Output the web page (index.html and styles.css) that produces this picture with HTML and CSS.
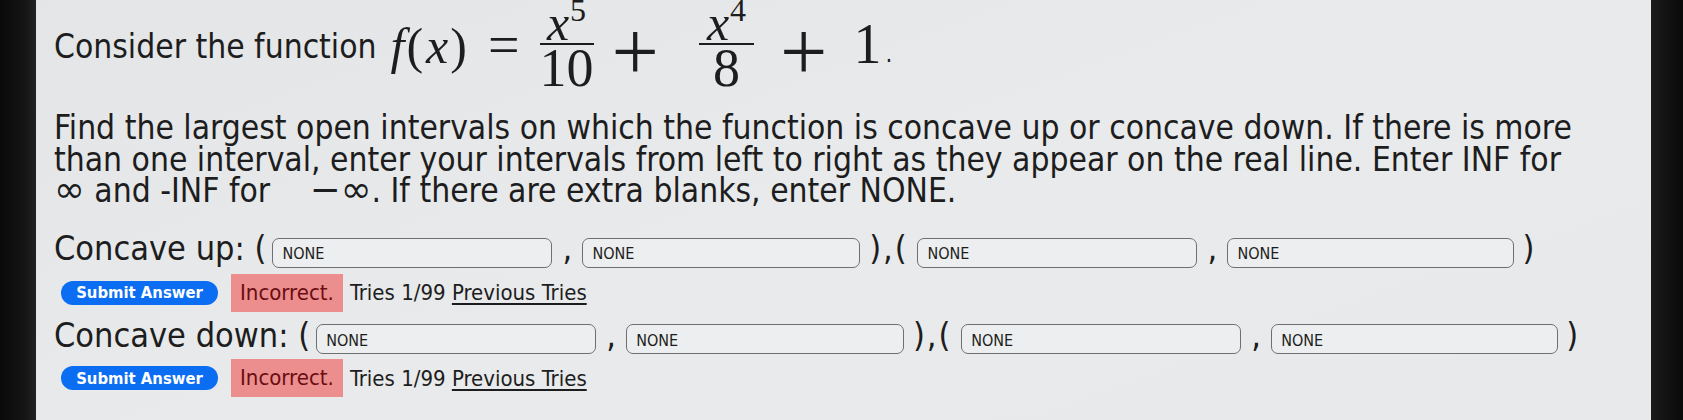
FILE: index.html
```html
<!DOCTYPE html>
<html lang="en">
<head>
<meta charset="utf-8">
<title>Concavity</title>
<link rel="stylesheet" href="styles.css">
</head>
<body>
<div class="screen">
  <div class="bezel bezel-left"></div>
  <main class="page">
    <p class="intro">Consider the function<span class="math"><span class="mi f">f</span><span class="paren">(</span><span class="mi">x</span><span class="paren">)</span><span class="rel">=</span><span class="frac frac-a"><span class="num"><span class="mi">x</span><sup>5</sup></span><span class="den">10</span></span><span class="bin bin-a">+</span><span class="frac frac-b"><span class="num"><span class="mi">x</span><sup>4</sup></span><span class="den">8</span></span><span class="bin bin-b">+</span><span class="mn">1</span></span><span class="dot">.</span></p>

    <p class="prompt">Find the largest open intervals on which the function is concave up or concave down. If there is more than one interval, enter your intervals from left to right as they appear on the real line. Enter INF for <span class="sym">∞</span> and -INF for <span class="sym neg">−∞</span>. If there are extra blanks, enter NONE.</p>

    <div class="answer-row">
      <span class="label">Concave up: (</span>
      <input class="ans a1" type="text" value="NONE">
      <span class="sep">,</span>
      <input class="ans a2" type="text" value="NONE">
      <span class="mid">),(</span>
      <input class="ans a3" type="text" value="NONE">
      <span class="sep">,</span>
      <input class="ans a4" type="text" value="NONE">
      <span class="close">)</span>
    </div>
    <div class="result-row">
      <button class="submit" type="button">Submit Answer</button>
      <span class="verdict">Incorrect.</span>
      <span class="tries">Tries 1/99 <a href="#" class="prev">Previous Tries</a></span>
    </div>

    <div class="answer-row">
      <span class="label">Concave down: (</span>
      <input class="ans a1" type="text" value="NONE">
      <span class="sep">,</span>
      <input class="ans a2" type="text" value="NONE">
      <span class="mid">),(</span>
      <input class="ans a3" type="text" value="NONE">
      <span class="sep">,</span>
      <input class="ans a4" type="text" value="NONE">
      <span class="close">)</span>
    </div>
    <div class="result-row">
      <button class="submit" type="button">Submit Answer</button>
      <span class="verdict">Incorrect.</span>
      <span class="tries">Tries 1/99 <a href="#" class="prev">Previous Tries</a></span>
    </div>
  </main>
  <div class="bezel bezel-right"></div>
</div>
</body>
</html>
```

FILE: styles.css
```css
html, body {
  margin: 0;
  padding: 0;
  height: 100%;
  background: #0d0d0e;
  overflow: hidden;
}

.screen {
  display: flex;
  height: 420px;
}

.bezel {
  flex: none;
}

.bezel-left {
  width: 36px;
  background: linear-gradient(to right, #0a0a0a, #151516 70%, #222224);
}

.bezel-right {
  width: 32px;
  background: linear-gradient(to right, #1b1b1c, #0a0a0b);
}

.page {
  flex: 1;
  background: linear-gradient(160deg, #e3e5e7 0%, #e8eaeb 50%, #e7e9ea 100%);
  padding: 0 0 0 18px;
  color: #1d1d20;
  font-family: "DejaVu Sans Condensed", "DejaVu Sans", sans-serif;
  font-stretch: condensed;
}

/* first line: sentence with the displayed formula */
.intro {
  margin: 0;
  height: 80px;
  font-size: 33.3px;
  line-height: 33px;
  white-space: nowrap;
}

.math {
  font-family: "Liberation Serif", serif;
  font-size: 50px;
  font-stretch: normal;
  margin-left: 14px;
  vertical-align: -5px;
}

.mi {
  font-style: italic;
}

.paren {
  padding: 0 3px 0 2px;
}

.rel {
  font-size: 56px;
  vertical-align: -1px;
  margin: 0 20px 0 18px;
}

.bin {
  font-size: 84px;
  vertical-align: -17px;
}

.bin-a {
  margin: 0 40px 0 18px;
}

.bin-b {
  margin: 0 26px 0 26px;
}

.mn {
  font-size: 56px;
}

/* stacked fraction: the denominator baseline hangs under the
   math baseline, the bar sits between the two rows */
.frac {
  display: inline-block;
  vertical-align: -22.5px;
  text-align: center;
}

.num {
  display: block;
  line-height: 30px;
  padding: 8px 5px 4.8px;
  border-bottom: 2px solid #1d1d20;
}

.frac-b .num {
  padding: 8px 8px 4.8px;
}

.num sup {
  font-size: 32px;
  line-height: 0;
  vertical-align: 19px;
  margin-left: 1px;
}

.den {
  display: block;
  font-size: 54px;
  line-height: 46px;
}

.dot {
  font-size: 24px;
  margin-left: 4px;
  vertical-align: -4px;
}

/* instructions paragraph */
.prompt {
  margin: 32px 0 0;
  font-size: 33.3px;
  line-height: 31.5px;
  max-width: 1540px;
}

.sym {
  font-family: "DejaVu Sans", sans-serif;
  font-stretch: normal;
  font-size: 37px;
  line-height: 0;
}

.neg {
  margin-left: 30px;
}

/* answer blanks */
.answer-row {
  display: flex;
  align-items: center;
  height: 34px;
  margin-top: 24.5px;
  font-size: 34px;
  line-height: 34px;
  white-space: nowrap;
}

.label {
  margin-right: 6px;
}

.ans {
  box-sizing: border-box;
  flex: none;
  height: 30px;
  margin-top: 9.5px;
  border: 1.5px solid #6d7073;
  border-radius: 7px;
  background: #eceeef;
  color: #1d1d20;
  padding: 2px 9px 0;
  font-family: "DejaVu Sans Condensed", "DejaVu Sans", sans-serif;
  font-stretch: condensed;
  font-size: 16px;
}

.a1 { width: 280px; }
.a2 { width: 278px; }
.a3 { width: 280px; }
.a4 { width: 287px; }

.sep {
  width: 30px;
  text-align: center;
}

.mid {
  width: 57px;
  text-align: center;
  letter-spacing: 2px;
}

.close {
  margin-left: 8px;
}

/* grading feedback */
.result-row {
  display: flex;
  align-items: center;
  height: 38px;
  margin-top: 8.5px;
  font-size: 22px;
}

.answer-row + .result-row + .answer-row {
  margin-top: 6px;
}

.answer-row + .result-row + .answer-row + .result-row {
  margin-top: 7.5px;
}

.submit {
  margin-left: 7px;
  width: 157px;
  height: 24px;
  border: none;
  border-radius: 12px;
  background: #0b6df2;
  color: #ffffff;
  font-family: "DejaVu Sans Condensed", "DejaVu Sans", sans-serif;
  font-stretch: condensed;
  font-weight: bold;
  font-size: 16.5px;
  padding: 0;
}

.verdict {
  margin-left: 13px;
  height: 38px;
  line-height: 38px;
  padding: 0 9px;
  background: #ec8e8e;
  color: #6a0d12;
}

.tries {
  margin-left: 7px;
}

.prev {
  color: #1d1d20;
  text-decoration: underline;
  text-underline-offset: 3px;
}
```
